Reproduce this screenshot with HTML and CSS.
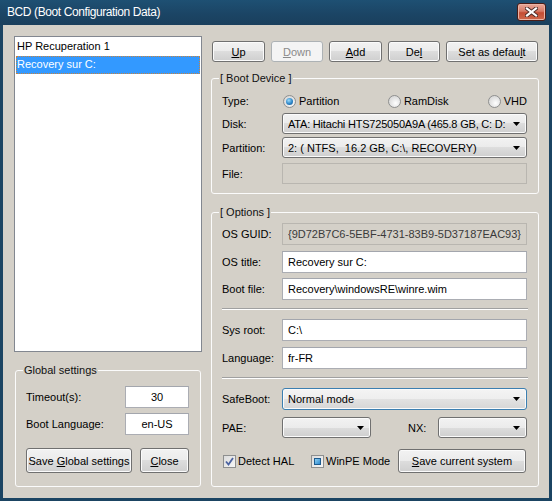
FILE: index.html
```html
<!doctype html>
<html lang="fr">

<head>
  <meta charset="utf-8" />
  <meta name="viewport" content="width=device-width,initial-scale=1" />
  <title>BCD (Boot Configuration Data)</title>

  <link rel="stylesheet" href="styles.css">
</head>

<body>
  <div class="window">
    <div class="titlebar">
      <div class="title">BCD (Boot Configuration Data)</div>
      <button type="button" class="close-btn">
        <svg width="13" height="10" viewBox="0 0 13 10">
          <path d="M2 1.5 L11 8.5 M11 1.5 L2 8.5" stroke="#4a2a26" stroke-width="4" stroke-linecap="square" />
          <path d="M2 1.5 L11 8.5 M11 1.5 L2 8.5" stroke="#ffffff" stroke-width="2.2" stroke-linecap="square" />
        </svg>
      </button>
    </div>

    <div class="client">
      <div class="left-col">
        <ul class="entry-list">
          <li>HP Recuperation 1</li>
          <li class="selected">Recovery sur C:</li>
        </ul>

        <fieldset class="group global">
          <legend>Global settings</legend>
          <div class="g-row">
            <div class="g-label">Timeout(s):</div>
            <input type="text" class="edit g-edit" value="30">
          </div>
          <div class="g-row gap5">
            <div class="g-label">Boot Language:</div>
            <input type="text" class="edit g-edit" value="en-US">
          </div>
          <div class="g-buttons">
            <button type="button" class="btn save-global">Save <u>G</u>lobal settings</button>
            <button type="button" class="btn close"><u>C</u>lose</button>
          </div>
        </fieldset>
      </div>

      <div class="right-col">
        <div class="toolbar">
          <button type="button" class="btn up"><u>U</u>p</button>
          <button type="button" class="btn down" disabled><u>D</u>own</button>
          <button type="button" class="btn add"><u>A</u>dd</button>
          <button type="button" class="btn del">De<u>l</u></button>
          <button type="button" class="btn set-default">Set as defau<u>l</u>t</button>
        </div>

        <fieldset class="group boot-device">
          <legend>[ Boot Device ]</legend>
          <div class="row type-row">
            <div class="label">Type:</div>
            <div class="radio-opt opt-partition"><span class="radio on"></span>Partition</div>
            <div class="radio-opt opt-ramdisk"><span class="radio"></span>RamDisk</div>
            <div class="radio-opt"><span class="radio"></span>VHD</div>
          </div>
          <div class="row mt4">
            <div class="label">Disk:</div>
            <div class="combo">
              <span class="combo-text tight">ATA: Hitachi HTS725050A9A (465.8 GB, C: D:</span>
              <svg class="arrow" width="7" height="4" viewBox="0 0 7 4"><path d="M0 0 H7 L3.5 4 Z" fill="#000" /></svg>
            </div>
          </div>
          <div class="row mt3">
            <div class="label">Partition:</div>
            <div class="combo">
              <span class="combo-text">2: ( NTFS,  16.2 GB, C:\, RECOVERY)</span>
              <svg class="arrow" width="7" height="4" viewBox="0 0 7 4"><path d="M0 0 H7 L3.5 4 Z" fill="#000" /></svg>
            </div>
          </div>
          <div class="row mt5">
            <div class="label">File:</div>
            <input type="text" class="edit short" value="" disabled>
          </div>
        </fieldset>

        <fieldset class="group options">
          <legend>[ Options ]</legend>
          <div class="row">
            <div class="label">OS GUID:</div>
            <input type="text" class="edit" value="{9D72B7C6-5EBF-4731-83B9-5D37187EAC93}" disabled>
          </div>
          <div class="row mt6">
            <div class="label">OS title:</div>
            <input type="text" class="edit" value="Recovery sur C:">
          </div>
          <div class="row mt5">
            <div class="label">Boot file:</div>
            <input type="text" class="edit" value="Recovery\windowsRE\winre.wim">
          </div>
          <div class="separator"></div>
          <div class="row mt9">
            <div class="label">Sys root:</div>
            <input type="text" class="edit" value="C:\">
          </div>
          <div class="row mt6">
            <div class="label">Language:</div>
            <input type="text" class="edit" value="fr-FR">
          </div>
          <div class="separator"></div>
          <div class="row mt9">
            <div class="label">SafeBoot:</div>
            <div class="combo tall focused">
              <span class="combo-text">Normal mode</span>
              <svg class="arrow" width="7" height="4" viewBox="0 0 7 4"><path d="M0 0 H7 L3.5 4 Z" fill="#000" /></svg>
            </div>
          </div>
          <div class="row mt7">
            <div class="label">PAE:</div>
            <div class="combo small">
              <span class="combo-text"></span>
              <svg class="arrow" width="7" height="4" viewBox="0 0 7 4"><path d="M0 0 H7 L3.5 4 Z" fill="#000" /></svg>
            </div>
            <div class="nx-label">NX:</div>
            <div class="combo small">
              <span class="combo-text"></span>
              <svg class="arrow" width="7" height="4" viewBox="0 0 7 4"><path d="M0 0 H7 L3.5 4 Z" fill="#000" /></svg>
            </div>
          </div>
          <div class="row bottom-row">
            <div class="check-opt opt-hal">
              <span class="checkbox">
                <svg width="9" height="9" viewBox="0 0 9 9"><path d="M1 4.5 L3.5 7.5 L8 1" fill="none" stroke="#4b62a0" stroke-width="1.8" /></svg>
              </span>Detect HAL
            </div>
            <div class="check-opt">
              <span class="checkbox mixed"><span class="mark"></span></span>WinPE Mode
            </div>
            <button type="button" class="btn save-current"><u>S</u>ave current system</button>
          </div>
        </fieldset>
      </div>
    </div>
  </div>
</body>

</html>
```

FILE: styles.css
```css
html,
body {
  margin: 0;
  padding: 0;
}

body {
  font-family: "Liberation Sans", Arial, sans-serif;
  font-size: 11px;
  color: #000;
}

.window {
  box-sizing: border-box;
  width: 552px;
  height: 501px;
  display: flex;
  flex-direction: column;
  padding: 0 3px 3px;
  background: #1b4462;
}

/* title bar */
.titlebar {
  flex-shrink: 0;
  height: 25px;
  margin: 0 -3px;
  padding: 0 6px 0 7px;
  display: flex;
  align-items: center;
  background: linear-gradient(#1e5073, #1b4464 60%, #1a3f5d);
}

.title {
  flex: 1;
  color: #fff;
  font-size: 12px;
  letter-spacing: -0.4px;
  padding-bottom: 1px;
}

.close-btn {
  box-sizing: border-box;
  width: 29px;
  height: 18px;
  margin-top: -1px;
  padding: 0;
  display: flex;
  align-items: center;
  justify-content: center;
  border: 1px solid #4b1d17;
  border-radius: 3px;
  background: linear-gradient(#e9a99a, #d67a66 45%, #c44c33 55%, #cf6a4d);
  box-shadow: inset 0 0 0 1px #eab4a6;
}

/* client area */
.client {
  flex: 1;
  display: flex;
  gap: 9px;
  padding: 11px 10px 11px 11px;
  background: #d4d0c8;
}

.left-col {
  flex: 0 0 188px;
  min-width: 0;
  display: flex;
  flex-direction: column;
}

.right-col {
  flex: 0 0 328px;
  min-width: 0;
  display: flex;
  flex-direction: column;
}

.entry-list {
  box-sizing: border-box;
  height: 316px;
  margin: 0;
  padding: 1px;
  list-style: none;
  background: #fff;
  border: 1px solid #828790;
}

.entry-list li {
  height: 16px;
  line-height: 14px;
  border: 1px solid transparent;
  white-space: nowrap;
}

.entry-list li.selected {
  background: #3399ff;
  color: #fff;
  border: 1px dotted #c7833f;
}

/* group boxes */
.group {
  box-sizing: border-box;
  min-width: 0;
  margin: 0;
  padding: 0 11px 0 10px;
  border: 1px solid #fbfbfb;
  border-radius: 3px;
}

.group legend {
  margin-left: -3px;
  padding: 0 1px;
  line-height: 13px;
  color: #111;
}

.global {
  height: 123px;
  margin: 12px 1px 0;
  padding-top: 9px;
}

.boot-device {
  height: 122px;
  margin-top: 10px;
  padding-top: 8px;
}

.options {
  height: 281px;
  margin-top: 12px;
  padding-top: 4px;
}

/* global settings rows */
.g-row {
  display: flex;
  align-items: center;
}

.g-label {
  width: 99px;
}

.g-edit {
  flex: 0 0 62px;
  text-align: center;
}

.gap5 {
  margin-top: 5px;
}

.g-buttons {
  display: flex;
  gap: 8px;
  margin-top: 13px;
}

.save-global {
  width: 106px;
  height: 25px;
}

.close {
  width: 49px;
  height: 25px;
}

/* buttons */
.btn {
  box-sizing: border-box;
  padding: 0;
  font: inherit;
  color: #000;
  border: 1px solid #707070;
  border-radius: 3px;
  background: linear-gradient(#f2f2f2, #ebebeb 50%, #dddddd 50%, #cfcfcf);
  box-shadow: inset 0 0 0 1px #fbfbfb;
}

.btn:disabled {
  color: #8a8a8a;
  border-color: #adb2b5;
  background: #f4f4f4;
  box-shadow: none;
}

.toolbar {
  display: flex;
  gap: 6px;
  margin: 5px 0 0 1px;
}

.toolbar .btn {
  height: 21px;
}

.up,
.add {
  width: 53px;
}

.down,
.del {
  width: 52px;
}

.set-default {
  width: 92px;
}

/* form rows */
.row {
  display: flex;
  align-items: center;
}

.label {
  width: 60px;
  flex-shrink: 0;
}

.mt3 { margin-top: 3px; }
.mt4 { margin-top: 4px; }
.mt5 { margin-top: 5px; }
.mt6 { margin-top: 6px; }
.mt7 { margin-top: 7px; }
.mt9 { margin-top: 9px; }

.edit {
  box-sizing: border-box;
  flex: 1;
  width: 0;
  min-width: 0;
  height: 22px;
  padding: 0 5px;
  font: inherit;
  color: #000;
  background: #fff;
  border: 1px solid #abadb3;
  border-top-color: #a3a6ad;
  outline: none;
}

.edit.short {
  height: 21px;
}

.edit:disabled {
  color: #3a3a3a;
  background: #d4d0c8;
  border-color: #b9b6b0;
}

.combo {
  box-sizing: border-box;
  flex: 1;
  width: 0;
  min-width: 0;
  height: 21px;
  padding: 0 6px 0 5px;
  display: flex;
  align-items: center;
  overflow: hidden;
  border: 1px solid #707070;
  border-radius: 3px;
  background: linear-gradient(#f2f2f2, #ebebeb 50%, #dddddd 50%, #cfcfcf);
  box-shadow: inset 0 0 0 1px #fbfbfb;
}

.combo.tall {
  height: 22px;
}

.combo.focused {
  border-color: #3c7fb1;
  background: linear-gradient(#f4f4f4, #eeeeee 50%, #e2e2e2 50%, #d6d6d6);
}

.combo.small {
  flex: 0 0 89px;
}

.combo-text {
  flex: 1;
  min-width: 0;
  overflow: hidden;
  white-space: pre;
}

.combo-text.tight {
  letter-spacing: -0.2px;
}

.combo .arrow {
  flex-shrink: 0;
  margin-left: 3px;
}

.nx-label {
  width: 30px;
  margin-left: 37px;
}

/* radio buttons */
.type-row {
  height: 16px;
}

.radio-opt {
  display: flex;
  align-items: center;
  gap: 3px;
}

.opt-partition {
  width: 105px;
  margin-left: 1px;
}

.opt-ramdisk {
  width: 100px;
}

.radio {
  box-sizing: border-box;
  width: 13px;
  height: 13px;
  display: flex;
  align-items: center;
  justify-content: center;
  border: 1px solid #8e8f8f;
  border-radius: 50%;
  background: radial-gradient(circle at 60% 65%, #ffffff, #e2e2e2 55%, #cfcfcf);
}

.radio.on::after {
  content: "";
  width: 7px;
  height: 7px;
  border-radius: 50%;
  background: radial-gradient(circle at 40% 35%, #9ddcfb, #2d86c8 55%, #1a4f85);
}

/* check boxes */
.bottom-row {
  margin-top: 11px;
}

.check-opt {
  display: flex;
  align-items: center;
  gap: 2px;
}

.opt-hal {
  width: 88px;
  margin-left: 1px;
}

.checkbox {
  box-sizing: border-box;
  width: 13px;
  height: 13px;
  display: flex;
  align-items: center;
  justify-content: center;
  border: 1px solid #8e8f8f;
  background: linear-gradient(135deg, #dcdcdc, #f6f6f6);
}

.checkbox.mixed .mark {
  width: 7px;
  height: 7px;
  border: 1px solid #1d5b8f;
  box-sizing: border-box;
  background: linear-gradient(135deg, #8fd0f2, #2d8ad0);
}

.save-current {
  width: 128px;
  height: 24px;
  margin-left: auto;
  margin-right: 1px;
}

.separator {
  height: 0;
  margin-top: 8px;
  margin-right: -1px;
  border-top: 1px solid #a0a0a0;
  border-bottom: 1px solid #fff;
}
```
